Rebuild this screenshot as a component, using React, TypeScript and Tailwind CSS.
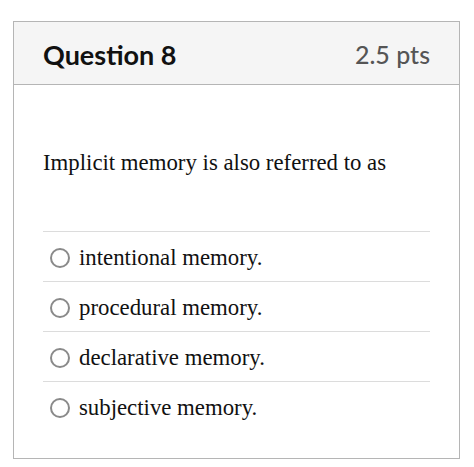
const options = [
  "intentional memory.",
  "procedural memory.",
  "declarative memory.",
  "subjective memory.",
];

export default function App() {
  return (
    <div className="h-[467px] w-[474px] bg-white pl-[13px] pt-[21px]">
      <div className="flex h-[438px] w-[447px] flex-col border border-[#b5b5b5]">
        <div className="flex h-[63px] items-center justify-between border-b border-[#b5b5b5] bg-[#f5f5f5] px-[29px] pt-[4px] font-['Lato',sans-serif]">
          <span className="text-[27px] font-bold text-[#111]">Question 8</span>
          <span className="text-[25px] font-medium text-[#555]">2.5 pts</span>
        </div>
        <div className="px-[29px] font-['Liberation_Serif',serif] text-[22.8px] text-[#111]">
          <p className="pt-[64px] leading-[28px]">Implicit memory is also referred to as</p>
          <div className="mt-[54px]">
            {options.map((o) => (
              <div key={o} className="flex h-[50px] items-center border-t border-[#dcdcdc] pt-[2px]">
                <span className="ml-[7px] mr-[9px] size-[20px] rounded-full border-2 border-[#8a8a8a]" />
                <span className="leading-[28px]">{o}</span>
              </div>
            ))}
          </div>
        </div>
      </div>
    </div>
  );
}
